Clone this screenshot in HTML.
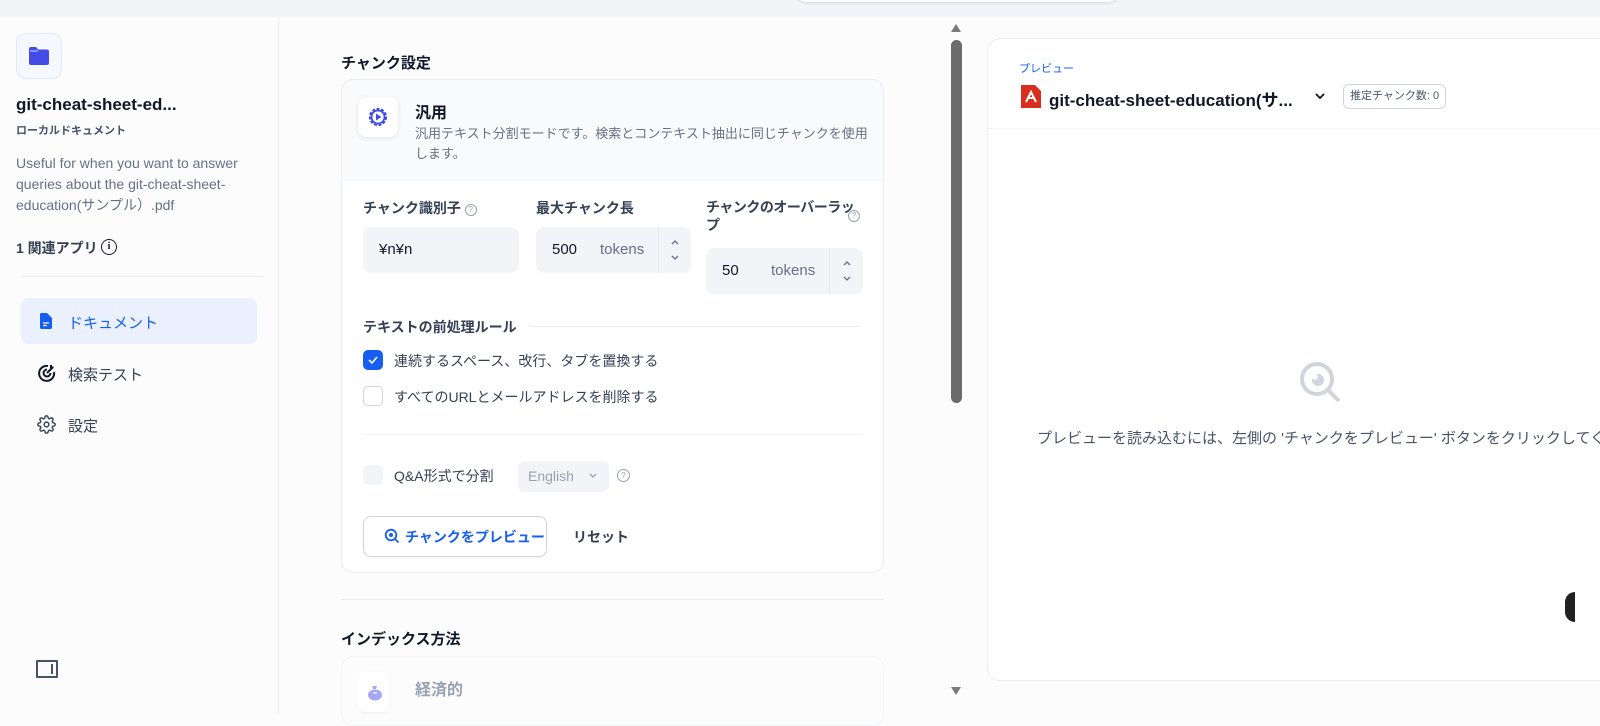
<!DOCTYPE html>
<html><head><meta charset="utf-8"><style>
*{box-sizing:border-box;margin:0;padding:0}
body{width:1600px;height:714px;overflow:hidden;background:#fcfcfd;font-family:"Liberation Sans","Noto Sans CJK JP",sans-serif;color:#101828;position:relative}
.a{position:absolute}
.top{left:0;top:0;width:1600px;height:17px;background:#f2f4f7}
.topbox{left:795px;top:-10px;width:325px;height:12px;background:#fff;border-radius:0 0 12px 12px;box-shadow:0 1px 3px rgba(0,0,0,.12)}
.side{left:0;top:17px;width:279px;height:697px;background:#fcfcfd;border-right:1px solid #eaecf0}
.t{white-space:nowrap}
.card{left:341px;top:79px;width:543px;height:494px;background:#fff;border:1px solid #eaecf0;border-radius:12px;overflow:hidden}
.inp{background:#f2f4f7;border-radius:8px;height:46px}
.lbl{font-size:14px;font-weight:bold;color:#344054}
.cb{width:20px;height:20px;border-radius:5px;border:1px solid #d0d5dd;background:#fff}
</style></head><body>
<div class="a top"></div>
<div class="a topbox"></div>
<div class="a side"></div>
<div class="a" style="left:16px;top:33px;width:46px;height:46px;border-radius:10px;background:#f5f8ff;border:1px solid #e0eaff"></div>
<svg class="a" style="left:27px;top:44px" width="24" height="24" viewBox="0 0 24 24"><path d="M2 5a2 2 0 0 1 2-2h5l2 2.5h9a2 2 0 0 1 2 2V19a2 2 0 0 1-2 2H4a2 2 0 0 1-2-2z" fill="#444ce7"/><path d="M3 7h8" stroke="#c7d7fe" stroke-width="1"/></svg>
<div class="a t" style="left:16px;top:95px;font-size:17px;font-weight:bold;color:#101828">git-cheat-sheet-ed...</div>
<div class="a t" style="left:16px;top:122px;font-size:11px;font-weight:bold;color:#475467">ローカルドキュメント</div>
<div class="a" style="left:16px;top:153px;width:250px;font-size:14px;line-height:21px;color:#667085">Useful for when you want to answer queries about the git-cheat-sheet-education(サンプル）.pdf</div>
<div class="a t" style="left:16px;top:238px;font-size:14px;font-weight:bold;color:#344054">1 関連アプリ</div>
<div class="a" style="left:101px;top:239px;width:16px;height:16px;border:1.6px solid #101828;border-radius:50%;font-size:10px;font-weight:bold;text-align:center;line-height:13px;font-family:'Liberation Serif',serif">i</div>
<div class="a" style="left:21px;top:276px;width:242px;height:1px;background:#eaecf0"></div>
<div class="a" style="left:21px;top:298px;width:236px;height:46px;background:#eaf0fe;border-radius:8px"></div>
<svg class="a" style="left:39px;top:313px" width="14" height="16" viewBox="0 0 14 16"><path d="M1 1.5A1.5 1.5 0 0 1 2.5 0H8l5 5v9.5a1.5 1.5 0 0 1-1.5 1.5h-9A1.5 1.5 0 0 1 1 14.5z" fill="#155eef"/><path d="M4 10h6M4 12.5h4" stroke="#fff" stroke-width="1.3"/></svg>
<div class="a t" style="left:68px;top:312px;font-size:15px;color:#155eef">ドキュメント</div>
<svg class="a" style="left:37px;top:363px" width="20" height="20" viewBox="0 0 20 20" fill="none" stroke="#101828" stroke-width="2"><path d="M17 9a7.5 7.5 0 1 1-6-6"/><path d="M13.5 10a3.5 3.5 0 1 1-3.5-3.5"/><path d="M10 10l6-6M14 2v2.5h2.5"/></svg>
<div class="a t" style="left:68px;top:364px;font-size:15px;color:#344054">検索テスト</div>
<svg class="a" style="left:37px;top:415px" width="19" height="19" viewBox="0 0 24 24" fill="none" stroke="#344054" stroke-width="1.8"><circle cx="12" cy="12" r="3"/><path d="M19.4 15a1.65 1.65 0 0 0 .33 1.820l.06.06a2 2 0 1 1-2.83 2.83l-.06-.06a1.65 1.65 0 0 0-1.820-.33 1.65 1.65 0 0 0-1 1.510V21a2 2 0 1 1-4 0v-.09A1.65 1.65 0 0 0 9 19.4a1.65 1.65 0 0 0-1.820.33l-.06.06a2 2 0 1 1-2.830-2.830l.06-.06A1.65 1.65 0 0 0 4.68 15a1.650 1.650 0 0 0-1.510-1H3a2 2 0 1 1 0-4h.09A1.65 1.65 0 0 0 4.6 9a1.65 1.65 0 0 0-.33-1.820l-.06-.06a2 2 0 1 1 2.830-2.830l.06.06A1.65 1.65 0 0 0 9 4.68a1.65 1.65 0 0 0 1-1.510V3a2 2 0 1 1 4 0v.09a1.65 1.65 0 0 0 1 1.510 1.65 1.65 0 0 0 1.820-.33l.06-.06a2 2 0 1 1 2.830 2.830l-.06.06A1.65 1.65 0 0 0 19.4 9a1.65 1.65 0 0 0 1.510 1H21a2 2 0 1 1 0 4h-.09a1.65 1.65 0 0 0-1.510 1z"/></svg>
<div class="a t" style="left:68px;top:415px;font-size:15px;color:#344054">設定</div>
<div class="a" style="left:36px;top:660px;width:22px;height:18px;border:2px solid #475467;border-radius:1px"></div>
<div class="a" style="left:51px;top:664px;width:2px;height:10px;background:#475467"></div>
<div class="a t" style="left:341px;top:52px;font-size:15px;font-weight:bold;color:#101828">チャンク設定</div>
<div class="a card">
  <div class="a" style="left:0;top:0;width:543px;height:101px;background:#f9fafb"></div>
  <div class="a" style="left:16px;top:17px;width:40px;height:40px;background:#fff;border-radius:8px;box-shadow:0 1px 4px rgba(0,0,0,.1)"></div>
  <svg class="a" style="left:24px;top:25px" width="24" height="24" viewBox="0 0 24 24"><circle cx="12" cy="12" r="8" fill="none" stroke="#444ce7" stroke-width="2.2" stroke-dasharray="3 1.5"/><circle cx="12" cy="12" r="6.5" fill="none" stroke="#444ce7" stroke-width="1.8"/><path d="M10 8.5v7l5.5-3.5z" fill="#444ce7"/></svg>
  <div class="a t" style="left:73px;top:19px;font-size:16px;font-weight:bold;color:#101828">汎用</div>
  <div class="a" style="left:73px;top:44px;width:455px;font-size:13px;line-height:20px;color:#667085">汎用テキスト分割モードです。検索とコンテキスト抽出に同じチャンクを使用します。</div>
  <div class="a t lbl" style="left:21px;top:118px">チャンク識別子 <span style="display:inline-block;width:12px;height:12px;border:1px solid #98a2b3;border-radius:50%;font-size:8px;color:#98a2b3;text-align:center;line-height:10px;font-weight:normal;vertical-align:1px">?</span></div>
  <div class="a inp" style="left:21px;top:147px;width:156px"><span class="a" style="left:16px;top:14px;font-size:15px;color:#101828">¥n¥n</span></div>
  <div class="a t lbl" style="left:194px;top:118px">最大チャンク長</div>
  <div class="a inp" style="left:194px;top:147px;width:155px">
    <span class="a" style="left:16px;top:14px;font-size:15px">500</span><span class="a" style="left:64px;top:14px;font-size:15px;color:#667085">tokens</span>
    <div class="a" style="left:122px;top:0;width:1px;height:46px;background:#e4e7ec"></div>
    <svg class="a" style="left:134px;top:11px" width="10" height="24" viewBox="0 0 10 24" fill="none" stroke="#667085" stroke-width="1.3"><path d="M2 6l3-3 3 3M2 18l3 3 3-3"/></svg>
  </div>
  <div class="a t lbl" style="left:364px;top:118px;line-height:18px;letter-spacing:-0.5px">チャンクのオーバーラッ<br>プ</div>
  <div class="a" style="left:506px;top:130px;width:12px;height:12px;border:1px solid #98a2b3;border-radius:50%;font-size:8px;color:#98a2b3;text-align:center;line-height:10px">?</div>
  <div class="a inp" style="left:364px;top:168px;width:157px">
    <span class="a" style="left:16px;top:14px;font-size:15px">50</span><span class="a" style="left:65px;top:14px;font-size:15px;color:#667085">tokens</span>
    <div class="a" style="left:123px;top:0;width:1px;height:46px;background:#e4e7ec"></div>
    <svg class="a" style="left:136px;top:11px" width="10" height="24" viewBox="0 0 10 24" fill="none" stroke="#667085" stroke-width="1.3"><path d="M2 6l3-3 3 3M2 18l3 3 3-3"/></svg>
  </div>
  <div class="a t" style="left:21px;top:237px;font-size:14px;font-weight:bold;color:#344054">テキストの前処理ルール</div>
  <div class="a" style="left:188px;top:246px;width:330px;height:1px;background:#eaecf0"></div>
  <div class="a cb" style="left:21px;top:270px;background:#155eef;border-color:#155eef"></div>
  <svg class="a" style="left:25px;top:274px" width="12" height="12" viewBox="0 0 12 12"><path d="M2 6l3 3 5-6" fill="none" stroke="#fff" stroke-width="1.6"/></svg>
  <div class="a t" style="left:52px;top:271px;font-size:14px;color:#344054">連続するスペース、改行、タブを置換する</div>
  <div class="a cb" style="left:21px;top:306px"></div>
  <div class="a t" style="left:52px;top:307px;font-size:14px;color:#344054">すべてのURLとメールアドレスを削除する</div>
  <div class="a" style="left:21px;top:354px;width:500px;height:1px;background:#f2f4f7"></div>
  <div class="a cb" style="left:21px;top:385px;background:#f2f4f7;border-color:#f2f4f7"></div>
  <div class="a t" style="left:52px;top:386px;font-size:14px;color:#344054">Q&amp;A形式で分割</div>
  <div class="a" style="left:176px;top:381px;width:91px;height:31px;background:#f2f4f7;border-radius:6px"><span class="a" style="left:10px;top:7px;font-size:14px;color:#98a2b3">English</span><svg class="a" style="left:70px;top:11px" width="10" height="8" viewBox="0 0 10 8"><path d="M2 2l3 3 3-3" fill="none" stroke="#98a2b3" stroke-width="1.3"/></svg></div>
  <div class="a" style="left:275px;top:389px;width:13px;height:13px;border:1px solid #98a2b3;border-radius:50%;font-size:8px;color:#98a2b3;text-align:center;line-height:11px">?</div>
  <div class="a" style="left:21px;top:436px;width:184px;height:41px;border:1px solid #d0d5dd;border-radius:8px;background:#fff;box-shadow:0 1px 2px rgba(0,0,0,.05)"></div>
  <svg class="a" style="left:42px;top:448px" width="16" height="16" viewBox="0 0 16 16" fill="none" stroke="#155eef" stroke-width="1.8"><circle cx="7" cy="7" r="5.3"/><path d="M11 11l3.5 3.5"/><circle cx="7" cy="7" r="2" fill="#155eef" stroke="none"/></svg>
  <div class="a t" style="left:63px;top:447px;font-size:14px;font-weight:bold;color:#155eef">チャンクをプレビュー</div>
  <div class="a t" style="left:231px;top:447px;font-size:14px;font-weight:bold;color:#344054">リセット</div>
</div>
<div class="a" style="left:341px;top:599px;width:543px;height:1px;background:#eaecf0"></div>
<div class="a t" style="left:341px;top:628px;font-size:15px;font-weight:bold;color:#101828">インデックス方法</div>
<div class="a" style="left:341px;top:656px;width:543px;height:70px;background:#fcfcfd;border:1px solid #f2f4f7;border-radius:12px"></div>
<div class="a" style="left:357px;top:672px;width:32px;height:40px;background:#fff;border-radius:8px;box-shadow:0 1px 3px rgba(0,0,0,.06)"></div>
<svg class="a" style="left:365px;top:683px" width="18" height="18" viewBox="0 0 18 18"><ellipse cx="10" cy="12" rx="7" ry="5.5" fill="#a4a9f5"/><path d="M7 3h5l-1 3H8z" fill="#a4a9f5"/><path d="M8 10h4" stroke="#fff" stroke-width="1.2"/></svg>
<div class="a t" style="left:415px;top:676px;font-size:16px;font-weight:bold;color:#98a2b3">経済的</div>
<div class="a" style="left:951px;top:24px;width:0;height:0;border-left:5px solid transparent;border-right:5px solid transparent;border-bottom:8px solid #7a7a7a"></div>
<div class="a" style="left:951px;top:40px;width:11px;height:363px;background:#6b6b6b;border-radius:6px"></div>
<div class="a" style="left:951px;top:687px;width:0;height:0;border-left:5px solid transparent;border-right:5px solid transparent;border-top:8px solid #7a7a7a"></div>
<div class="a" style="left:987px;top:38px;width:640px;height:643px;background:#fff;border:1px solid #eaecf0;border-radius:14px"></div>
<div class="a" style="left:988px;top:128px;width:612px;height:1px;background:#f2f4f7"></div>
<div class="a t" style="left:1019px;top:60px;font-size:11px;color:#155eef">プレビュー</div>
<svg class="a" style="left:1021px;top:85px" width="20" height="23" viewBox="0 0 20 23"><path d="M0 0h14l6 6v17H0z" fill="#d92d20"/><path d="M5 17l5-10 5 10M7.5 13h5" stroke="#fff" stroke-width="2" fill="none"/></svg>
<div class="a t" style="left:1049px;top:86px;font-size:17px;font-weight:bold;color:#101828">git-cheat-sheet-education(サ...</div>
<svg class="a" style="left:1313px;top:89px" width="14" height="14" viewBox="0 0 14 14"><path d="M3 5l4 4 4-4" fill="none" stroke="#101828" stroke-width="1.8"/></svg>
<div class="a t" style="left:1343px;top:84px;height:25px;padding:0 6px;border:1px solid #d0d5dd;border-radius:6px;font-size:11px;line-height:23px;color:#475467">推定チャンク数: 0</div>
<svg class="a" style="left:1298px;top:360px" width="46" height="46" viewBox="0 0 46 46" fill="none" stroke="#d0d5dd" stroke-width="4"><circle cx="19" cy="19" r="15"/><path d="M30 30l11 11"/><circle cx="20" cy="20" r="6" fill="#d0d5dd" stroke="none"/><circle cx="17" cy="17" r="2.8" fill="#fff" stroke="none"/></svg>
<div class="a t" style="left:1037px;top:427px;font-size:15px;color:#475467">プレビューを読み込むには、左側の 'チャンクをプレビュー' ボタンをクリックしてください</div>
<div class="a" style="left:1565px;top:592px;width:10px;height:30px;background:#222;border-radius:10px 0 0 10px"></div>
</body></html>
